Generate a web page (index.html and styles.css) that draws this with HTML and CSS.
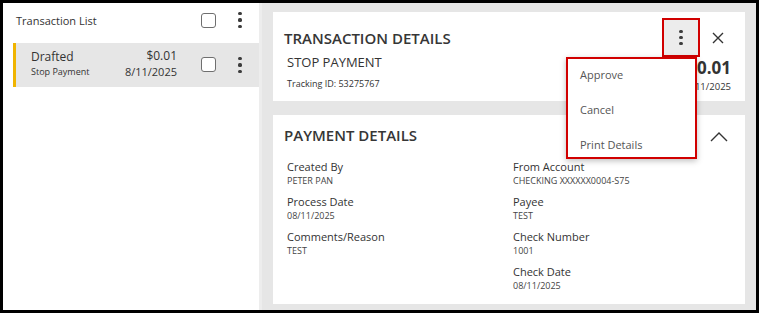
FILE: index.html
```html
<!DOCTYPE html>
<html lang="en">
<head>
  <meta charset="UTF-8" />
  <meta name="viewport" content="width=device-width, initial-scale=1.0" />
  <title>Transaction Details</title>
  <link rel="stylesheet" href="styles.css">
</head>
<body>
  <div class="frame">

    <!-- left: transaction list -->
    <aside class="list">
      <div class="list-head">
        <span class="list-title">Transaction List</span>
        <span class="check"></span>
        <span class="kebab"><i></i><i></i><i></i></span>
      </div>
      <div class="list-row">
        <div class="row-main">
          <span class="row-status">Drafted</span>
          <span class="row-type">Stop Payment</span>
        </div>
        <div class="row-amount">
          <span>$0.01</span>
          <span class="row-date">8/11/2025</span>
        </div>
        <span class="check"></span>
        <span class="kebab"><i></i><i></i><i></i></span>
      </div>
    </aside>

    <!-- right: details -->
    <main class="detail">
      <section class="card card-tx">
        <div class="card-head">
          <h2 class="card-title">TRANSACTION DETAILS</h2>
          <div class="actions">
            <button class="btn-kebab" aria-label="More"><span class="kebab"><i></i><i></i><i></i></span></button>
            <button class="btn-icon" aria-label="Close">
              <svg width="12" height="12" viewBox="0 0 12 12"><path d="M1 1L11 11M11 1L1 11" stroke="#333" stroke-width="1.4" fill="none"/></svg>
            </button>
          </div>
        </div>
        <div class="tx-body">
          <div>
            <div class="tx-type">STOP PAYMENT</div>
            <div class="tx-track">Tracking ID: 53275767</div>
          </div>
          <div class="tx-amount">
            <div class="tx-sum">$0.01</div>
            <div class="tx-date">8/11/2025</div>
          </div>
        </div>

        <ul class="menu">
          <li>Approve</li>
          <li>Cancel</li>
          <li>Print Details</li>
        </ul>
      </section>

      <section class="card card-pay">
        <div class="card-head pay-head">
          <h2 class="card-title">PAYMENT DETAILS</h2>
          <button class="btn-icon" aria-label="Collapse">
            <svg width="18" height="10" viewBox="0 0 18 10"><path d="M1 9L9 1L17 9" stroke="#333" stroke-width="1.4" fill="none"/></svg>
          </button>
        </div>
        <div class="fields">
          <div class="col">
            <div class="field"><div class="label">Created By</div><div class="value">PETER PAN</div></div>
            <div class="field"><div class="label">Process Date</div><div class="value">08/11/2025</div></div>
            <div class="field"><div class="label">Comments/Reason</div><div class="value">TEST</div></div>
          </div>
          <div class="col">
            <div class="field"><div class="label">From Account</div><div class="value">CHECKING XXXXXX0004-S75</div></div>
            <div class="field"><div class="label">Payee</div><div class="value">TEST</div></div>
            <div class="field"><div class="label">Check Number</div><div class="value">1001</div></div>
            <div class="field"><div class="label">Check Date</div><div class="value">08/11/2025</div></div>
          </div>
        </div>
      </section>
    </main>

  </div>
</body>
</html>
```

FILE: styles.css
```css
/* ─── reset ─── */
*,*::before,*::after{box-sizing:border-box;margin:0;padding:0}
html,body{width:100%;height:100%;overflow:hidden;background:#000}
body{font-family:"Open Sans","Liberation Sans",sans-serif;color:#333}
button{border:none;background:none;font:inherit;cursor:pointer}
ul{list-style:none}

.frame{
  display:flex;width:759px;height:313px;
  border:3px solid #000;
  overflow:hidden;
}

/* ─── shared bits ─── */
.check{
  width:15px;height:15px;flex:none;
  border:1.5px solid #6f6f6f;border-radius:3px;background:#fff;
}
.kebab{display:flex;flex-direction:column;align-items:center;gap:3px;width:6px}
.kebab i{width:3.2px;height:3.2px;border-radius:50%;background:#3c3c3c}

/* ─── list ─── */
.list{width:256px;flex:none;background:#fff}
.list-head{
  display:flex;align-items:center;height:34px;margin-bottom:6px;
  padding:0 0 0 13px;
}
.list-title{flex:1;font-size:11px}
.list-head .check{margin-right:21px}
.list-head .kebab{margin-right:16px}

.list-row{
  display:flex;align-items:center;height:44px;margin-left:10px;
  background:#e6e6e6;border-left:3px solid #f0b400;
  padding-left:15px;padding-bottom:3px;
}
.row-main{display:flex;flex-direction:column;flex:1}
.row-status{font-size:12px;line-height:16px}
.row-type{font-size:9px;line-height:14px}
.row-amount{
  display:flex;flex-direction:column;align-items:flex-end;
  font-size:12px;line-height:16px;margin-right:24px;
}
.row-date{font-size:11px;line-height:16px}
.list-row .check{margin-right:21px;margin-top:1px}
.list-row .kebab{margin-right:16px;margin-top:3px}

/* ─── details ─── */
.detail{
  flex:1;background:#e6e6e6;border-left:3px solid #ededed;
  display:flex;flex-direction:column;gap:14px;
  padding:9px 11px 0 11px;
}
.card{background:#fff;position:relative;flex:none}
.card-tx{height:89px;z-index:2}
.card-pay{height:189px}

.card-head{display:flex;align-items:center;justify-content:space-between}
.card-tx .card-head{padding:6px 9px 0 11px}
.card-title{font-size:15px;font-weight:600;color:#363636}

.actions{display:flex;align-items:center}
.btn-kebab{
  width:38px;height:39px;display:flex;align-items:center;justify-content:center;
  background:#ececec;outline:2.5px solid #d10000;outline-offset:-2px;
}
.btn-icon{width:36px;height:36px;display:flex;align-items:center;justify-content:center}

.tx-body{display:flex;justify-content:space-between;padding:0 14px}
.tx-type{font-size:13px;font-weight:500;line-height:18px;margin-top:-4px}
.tx-track{font-size:9px;line-height:12px;margin-top:7px}
.tx-amount{text-align:right}
.tx-sum{font-size:17px;font-weight:700;line-height:22px}
.tx-date{font-size:9.5px;line-height:12px;margin-top:2px}

/* dropdown */
.menu{
  position:absolute;top:45px;left:293px;width:131px;height:102px;
  background:#fff;border:2.5px solid #d10000;
  box-shadow:0 2px 6px rgba(0,0,0,.25);
}
.menu li{
  height:35px;line-height:31px;padding-left:12px;
  font-size:11px;color:#555;
}

.pay-head{padding:8px 8px 0 11px}
.pay-head .btn-icon{width:36px;height:24px;padding-top:3px}

.fields{
  display:grid;grid-template-columns:226px 1fr;
  padding:12px 14px 0;
}
.field{margin-bottom:7px}
.label{font-size:11px;line-height:16px;color:#333}
.value{font-size:9px;line-height:12px;color:#444}
```
